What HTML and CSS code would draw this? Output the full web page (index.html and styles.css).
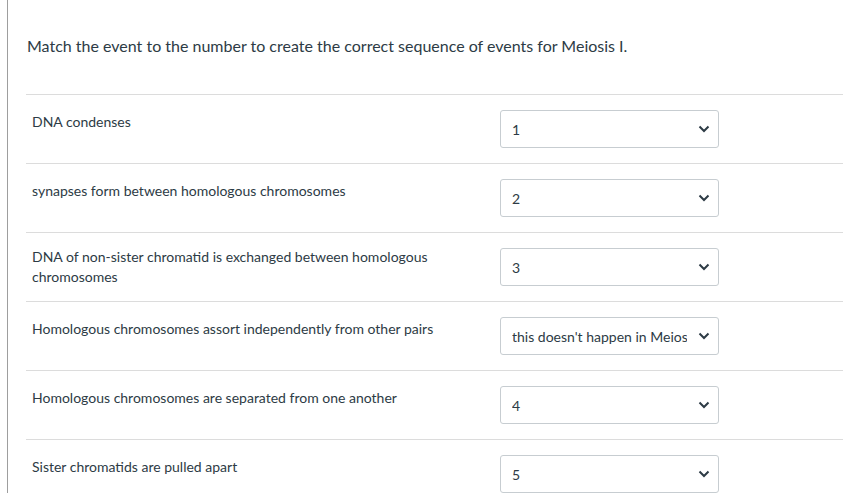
FILE: index.html
```html
<!DOCTYPE html>
<html>
<head>
<meta charset="utf-8">
<link rel="stylesheet" href="styles.css">
</head>
<body>
<div class="page">
  <div class="question">Match the event to the number to create the correct sequence of events for Meiosis I.</div>
  <div class="answers">
    <div class="row">
      <div class="label">DNA condenses</div>
      <div class="select"><span class="value">1</span><svg class="chev" width="12" height="8" viewBox="0 0 12 8"><path d="M1.5 1.5 L6 6 L10.5 1.5" fill="none" stroke="#2d3b45" stroke-width="2"/></svg></div>
    </div>
    <div class="row">
      <div class="label">synapses form between homologous chromosomes</div>
      <div class="select"><span class="value">2</span><svg class="chev" width="12" height="8" viewBox="0 0 12 8"><path d="M1.5 1.5 L6 6 L10.5 1.5" fill="none" stroke="#2d3b45" stroke-width="2"/></svg></div>
    </div>
    <div class="row">
      <div class="label multi">DNA of non-sister chromatid is exchanged between homologous chromosomes</div>
      <div class="select"><span class="value">3</span><svg class="chev" width="12" height="8" viewBox="0 0 12 8"><path d="M1.5 1.5 L6 6 L10.5 1.5" fill="none" stroke="#2d3b45" stroke-width="2"/></svg></div>
    </div>
    <div class="row">
      <div class="label">Homologous chromosomes assort independently from other pairs</div>
      <div class="select"><span class="value">this doesn't happen in Meiosis I</span><svg class="chev" width="12" height="8" viewBox="0 0 12 8"><path d="M1.5 1.5 L6 6 L10.5 1.5" fill="none" stroke="#2d3b45" stroke-width="2"/></svg></div>
    </div>
    <div class="row">
      <div class="label">Homologous chromosomes are separated from one another</div>
      <div class="select"><span class="value">4</span><svg class="chev" width="12" height="8" viewBox="0 0 12 8"><path d="M1.5 1.5 L6 6 L10.5 1.5" fill="none" stroke="#2d3b45" stroke-width="2"/></svg></div>
    </div>
    <div class="row">
      <div class="label">Sister chromatids are pulled apart</div>
      <div class="select"><span class="value">5</span><svg class="chev" width="12" height="8" viewBox="0 0 12 8"><path d="M1.5 1.5 L6 6 L10.5 1.5" fill="none" stroke="#2d3b45" stroke-width="2"/></svg></div>
    </div>
  </div>
</div>
</body>
</html>
```

FILE: styles.css
```css
html, body {
  margin: 0;
  padding: 0;
  background: #fff;
  overflow: hidden;
}
body {
  font-family: Lato, "Open Sans", sans-serif;
  color: #2d3b45;
}
.page {
  margin-left: 7px;
  border-left: 1px solid #9e9e9e;
  min-height: 493px;
  padding-left: 18px;
}
.question {
  padding-top: 36px;
  padding-left: 1px;
  font-size: 16px;
  line-height: 20px;
  height: 58px;
}
.row {
  display: flex;
  border-top: 1px solid #dcdcdc;
  height: 68px;
}
.label {
  width: 474px;
  box-sizing: border-box;
  padding: 17px 40px 0 6px;
  font-size: 14px;
  line-height: 20px;
}
.label.multi {
  padding-top: 14px;
}
.select {
  margin-top: 15px;
  width: 219px;
  height: 38px;
  box-sizing: border-box;
  border: 1px solid #c7cdd1;
  border-radius: 3px;
  display: flex;
  align-items: center;
  padding-left: 11px;
  padding-right: 8px;
  font-size: 14px;
}
.value {
  flex: 1;
  white-space: nowrap;
  overflow: hidden;
  text-overflow: clip;
  margin-right: 11px;
}
.chev {
  flex: none;
}
```
